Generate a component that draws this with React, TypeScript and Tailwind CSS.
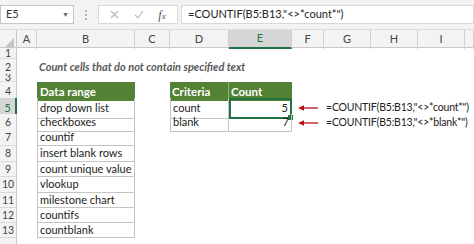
import React from "react";

const COLS = "grid grid-cols-[17px_20px_98px_35px_59px_63px_32px_47px_47px_47px_1fr]";

const data = [
  "drop down list",
  "checkboxes",
  "countif",
  "insert blank rows",
  "count unique value",
  "vlookup",
  "milestone chart",
  "countifs",
  "countblank",
];

function RowHead({ n, active }: { n?: number; active?: boolean }) {
  return (
    <div
      className={
        "flex items-center justify-center overflow-hidden border-b border-[#dadada] text-[10.5px] leading-none " +
        (active
          ? "bg-[#d6d6d6] text-[#217346] border-r-2 border-r-[#217346]"
          : "bg-[#f3f3f3] text-[#444] border-r border-r-[#c8c8c8]")
      }
    >
      {n}
    </div>
  );
}

function Arrow() {
  return (
    <svg width="20" height="8" viewBox="0 0 20 8" className="shrink-0">
      <line x1="4" y1="4" x2="20" y2="4" stroke="#b3141d" strokeWidth="1.3" />
      <path d="M0 4 L6 1.2 L6 6.8 Z" fill="#b3141d" />
    </svg>
  );
}

function Note({ text }: { text: string }) {
  return (
    <div className="relative">
      <div className="absolute left-[6px] top-0 h-full flex items-center gap-[8px] whitespace-nowrap text-[10.5px] tracking-[-0.2px] text-[#222]">
        <Arrow />
        <span>{text}</span>
      </div>
    </div>
  );
}

export default function App() {
  const heights = [16, 16, 16, 16, 15, 16, 15, 15, 15];

  return (
    <div
      className="w-[474px] h-[244px] overflow-hidden bg-white"
      style={{ fontFamily: "Lato, 'Open Sans', sans-serif" }}
    >
      {/* formula bar */}
      <div className="h-[30px] bg-[#f3f3f3] flex items-center border-b border-[#dcdcdc]">
        <div className="w-[74px] h-[19px] bg-white border border-[#c6c6c6] flex items-center justify-between pl-[5px] pr-[4px] text-[11px] text-[#333]">
          <span>E5</span>
          <span className="text-[7px] text-[#666]">▼</span>
        </div>
        <div className="w-[24px] flex flex-col items-center gap-[2px]">
          <span className="w-[2px] h-[2px] bg-[#b8b8b8]" />
          <span className="w-[2px] h-[2px] bg-[#b8b8b8]" />
          <span className="w-[2px] h-[2px] bg-[#b8b8b8]" />
        </div>
        <div className="w-[80px] h-[19px] bg-white border border-[#d8d8d8] flex items-center justify-around px-[4px]">
          <svg width="9" height="9" viewBox="0 0 9 9">
            <path d="M1 1 L8 8 M8 1 L1 8" stroke="#b5b5b5" strokeWidth="1.1" />
          </svg>
          <svg width="10" height="9" viewBox="0 0 10 9">
            <path d="M1 5 L4 8 L9 1" stroke="#b5b5b5" strokeWidth="1.1" fill="none" />
          </svg>
          <span className="italic text-[12px] text-[#555]" style={{ fontFamily: "'Liberation Serif', serif" }}>
            f<span className="text-[9px]">x</span>
          </span>
        </div>
        <div className="ml-[3px] flex-1 h-[19px] bg-white border border-[#d8d8d8] flex items-center pl-[6px] text-[11px] text-[#222] whitespace-nowrap">
          =COUNTIF(B5:B13,"&lt;&gt;*count*")
        </div>
      </div>

      {/* column headings */}
      <div className={COLS + " h-[18px] bg-[#f3f3f3] border-b border-[#c8c8c8] text-[11px] text-[#444]"}>
        <div className="relative border-r border-[#c8c8c8]">
          <svg width="9" height="9" viewBox="0 0 9 9" className="absolute right-[2px] bottom-[2px]">
            <path d="M9 0 L9 9 L0 9 Z" fill="#c5c5c5" />
          </svg>
        </div>
        {["A", "B", "C", "D", "E", "F", "G", "H", "I", ""].map((c) => (
          <div
            key={c || "J"}
            className={
              "flex items-center justify-center border-r border-[#d0d0d0] " +
              (c === "E" ? "bg-[#d6d6d6] border-b-2 border-b-[#217346] text-[#217346]" : "")
            }
          >
            {c}
          </div>
        ))}
      </div>

      {/* row 1 */}
      <div className={COLS + " h-[11px]"}>
        <RowHead n={1} />
      </div>

      {/* row 2 - title */}
      <div className={COLS + " h-[15px]"}>
        <RowHead n={2} />
        <div />
        <div className="flex items-center whitespace-nowrap pl-[2px] text-[11px] font-bold italic text-[#595959]">
          Count cells that do not contain specified text
        </div>
      </div>

      {/* row 3 */}
      <div className={COLS + " h-[8px]"}>
        <RowHead n={3} />
      </div>

      {/* row 4 - headers */}
      <div className={COLS + " h-[16px]"}>
        <RowHead n={4} />
        <div />
        <div className="bg-[#548235] text-white font-bold text-[11.5px] flex items-center pl-[2px] border border-[#548235]">
          Data range
        </div>
        <div />
        <div className="bg-[#548235] text-white font-bold text-[11.5px] flex items-center pl-[2px] border-r border-r-[#8fb07a]">
          Criteria
        </div>
        <div className="bg-[#548235] text-white font-bold text-[11.5px] flex items-center pl-[2px]">
          Count
        </div>
      </div>

      {data.map((d, i) => {
        const n = i + 5;
        return (
          <div key={d} className={COLS} style={{ height: heights[i] }}>
            <RowHead n={n} active={n === 5} />
            <div />
            <div className="flex items-center pl-[2px] text-[11px] text-[#222] border-x border-b border-[#c4c4c4] whitespace-nowrap overflow-hidden">
              {d}
            </div>
            <div />
            {n === 5 || n === 6 ? (
              <>
                <div className="flex items-center pl-[2px] text-[11px] text-[#222] border-x border-b border-[#c4c4c4]">
                  {n === 5 ? "count" : "blank"}
                </div>
                <div
                  className={
                    "relative flex items-center justify-end pr-[2px] text-[11px] text-[#222] " +
                    (n === 5 ? "border-2 border-[#217346]" : "border-r border-b border-[#c4c4c4]")
                  }
                >
                  {n === 5 ? "5" : "7"}
                  {n === 5 && (
                    <span className="absolute -right-[3px] -bottom-[3px] w-[5px] h-[5px] bg-[#217346]" />
                  )}
                </div>
                <Note
                  text={
                    n === 5
                      ? '=COUNTIF(B5:B13,"<>*count*")'
                      : '=COUNTIF(B5:B13,"<>*blank*")'
                  }
                />
              </>
            ) : null}
          </div>
        );
      })}

      {/* row 14, only its header edge shows */}
      <div className={COLS + " h-[12px]"}>
        <RowHead />
      </div>
    </div>
  );
}
